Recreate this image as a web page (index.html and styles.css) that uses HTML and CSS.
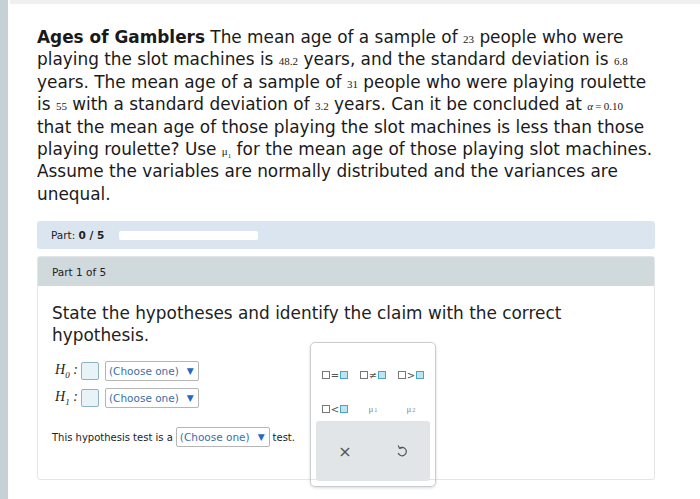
FILE: index.html
```html
<!DOCTYPE html>
<html>
<head>
<meta charset="utf-8">
<link rel="stylesheet" href="styles.css">
</head>
<body>
<div class="page">
  <div class="strip"></div>
  <div class="main">
    <div class="topbar"></div>
    <div class="content">
      <p class="problem"><b>Ages of Gamblers</b> The mean age of a sample of <span class="num">23</span> people who were<br>playing the slot machines is <span class="num">48.2</span> years, and the standard deviation is <span class="num">6.8</span><br>years. The mean age of a sample of <span class="num">31</span> people who were playing roulette<br>is <span class="num">55</span> with a standard deviation of <span class="num">3.2</span> years. Can it be concluded at <span class="num"><i>α</i>&thinsp;=&thinsp;0.10</span><br>that the mean age of those playing the slot machines is less than those<br>playing roulette? Use <span class="num mu">μ<sub>1</sub></span> for the mean age of those playing slot machines.<br>Assume the variables are normally distributed and the variances are<br>unequal.</p>

      <div class="partbar">
        <span>Part: <b>0 / 5</b></span>
        <div class="progress"></div>
      </div>

      <div class="card">
        <div class="card-head">Part 1 of 5</div>
        <div class="card-body">
          <p class="prompt">State the hypotheses and identify the claim with the correct<br>hypothesis.</p>
          <div class="work">
            <div class="left">
              <div class="hrow">
                <span class="hlabel"><i>H</i><sub>0</sub> :</span>
                <span class="box"></span>
                <span class="select">(Choose one) <span class="arrow">▼</span></span>
              </div>
              <div class="hrow">
                <span class="hlabel"><i>H</i><sub>1</sub> :</span>
                <span class="box"></span>
                <span class="select">(Choose one) <span class="arrow">▼</span></span>
              </div>
              <div class="testrow">
                This hypothesis test is a <span class="select">(Choose one) <span class="arrow">▼</span></span> test.
              </div>
            </div>
            <div class="palette">
              <div class="pgrid">
                <span class="pkey"><span class="sq"></span>=<span class="sq blue"></span></span>
                <span class="pkey"><span class="sq"></span>≠<span class="sq blue"></span></span>
                <span class="pkey"><span class="sq"></span>&gt;<span class="sq blue"></span></span>
                <span class="pkey"><span class="sq"></span>&lt;<span class="sq blue"></span></span>
                <span class="pkey mu-key">μ<sub>1</sub></span>
                <span class="pkey mu-key">μ<sub>2</sub></span>
              </div>
              <div class="pactions">
                <span class="x">×</span>
                <svg class="undo" width="12" height="14" viewBox="0 0 12 14"><path d="M3.4 4.4 A4.2 4.2 0 1 1 2.2 9" fill="none" stroke="#555" stroke-width="1.2"/><path d="M2.2 1.6 L3.6 4.4 L6.6 3.6" fill="none" stroke="#555" stroke-width="1.2"/></svg>
              </div>
            </div>
          </div>
        </div>
      </div>
    </div>
  </div>
</div>
</body>
</html>
```

FILE: styles.css
```css
html, body {
  margin: 0;
  padding: 0;
  background: #fff;
}
body {
  font-family: "DejaVu Sans", Verdana, sans-serif;
  color: #222;
}
.page {
  display: flex;
  width: 700px;
  height: 499px;
  overflow: hidden;
}
.strip {
  width: 8px;
  background: #c6d1d7;
  flex: none;
}
.main {
  flex: 1;
  padding-left: 2px;
}
.topbar {
  height: 4px;
  background: #f0f0f0;
}
.content {
  padding: 0 45px 0 27px;
}
.problem {
  margin: 0;
  padding-top: 22px;
  font-size: 16.9px;
  line-height: 22.4px;
  color: #1a1a1a;
  white-space: nowrap;
}
.num {
  font-family: "Liberation Serif", serif;
  font-size: 11px;
  line-height: 0;
}
.mu sub {
  font-size: 7px;
  line-height: 0;
}
.partbar {
  margin-top: 16px;
  height: 28px;
  background: #dbe5ef;
  border-radius: 3px;
  display: flex;
  align-items: center;
  padding-left: 14px;
  font-size: 10.5px;
  gap: 15px;
}
.progress {
  width: 139px;
  height: 9px;
  background: #fff;
  border-radius: 2px;
}
.card {
  margin-top: 7px;
  border: 1px solid #e3e6e8;
  border-radius: 3px;
  height: 224px;
  box-sizing: border-box;
}
.card-head {
  height: 29px;
  background: #d0d9dc;
  display: flex;
  align-items: center;
  padding-left: 14px;
  font-size: 10.5px;
}
.card-body {
  padding: 16px 14px 0 14px;
}
.prompt {
  margin: 0;
  font-size: 16.9px;
  line-height: 22px;
  white-space: nowrap;
}
.work {
  display: flex;
  margin-top: -4px;
}
.left {
  width: 258px;
  padding-top: 19px;
}
.hrow {
  display: flex;
  align-items: center;
  height: 20px;
  margin-bottom: 7px;
}
.hlabel {
  font-family: "Liberation Serif", serif;
  font-size: 14px;
  width: 26px;
  padding-left: 3px;
  color: #222;
  font-style: italic;
}
.hlabel sub {
  font-size: 9px;
}
.box {
  width: 16px;
  height: 16px;
  border: 1px solid #8fb3c2;
  background: #e7f3f7;
  border-radius: 2px;
  margin-right: 6px;
}
.select {
  display: inline-flex;
  align-items: center;
  height: 18px;
  border: 1px solid #b5b5b5;
  border-radius: 2px;
  padding: 0 4px 0 3px;
  font-size: 10.5px;
  color: #3a6fa8;
  gap: 8px;
}
.arrow {
  font-size: 9px;
  color: #1f6ac2;
}
.testrow {
  margin-top: 19px;
  font-size: 10px;
  display: flex;
  align-items: center;
  gap: 3px;
}
.testrow .select {
  font-size: 10.5px;
}
.palette {
  width: 126px;
  height: 145px;
  border: 1px solid #c9cdd0;
  border-radius: 5px;
  box-shadow: 0 1px 3px rgba(0,0,0,0.15);
  display: flex;
  flex-direction: column;
  padding: 5px;
  box-sizing: border-box;
}
.pgrid {
  display: grid;
  grid-template-columns: repeat(3, 1fr);
  grid-auto-rows: 34px;
  padding-top: 10px;
  height: 73px;
  box-sizing: border-box;
}
.pkey {
  display: flex;
  align-items: center;
  justify-content: center;
  font-size: 10px;
  color: #555;
  gap: 1px;
}
.sq {
  display: inline-block;
  width: 6px;
  height: 6px;
  border: 1px solid #777;
}
.sq.blue {
  border-color: #4aa3c0;
  background: #bfe4ee;
}
.mu-key {
  font-family: "Liberation Serif", serif;
  font-size: 9px;
  color: #888;
}
.mu-key sub {
  font-size: 6.5px;
}
.pactions {
  flex: 1;
  background: #e1e5e8;
  border-radius: 3px;
  display: flex;
  align-items: center;
  justify-content: space-around;
}
.x {
  font-size: 16px;
  color: #555;
}
```
